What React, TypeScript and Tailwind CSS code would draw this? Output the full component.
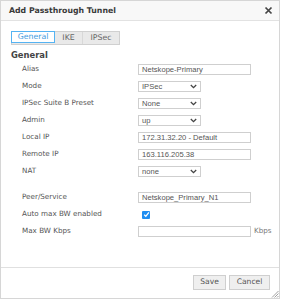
import { useState } from 'react';

const LABEL = "font-['DejaVu_Sans',sans-serif] text-[7.2px] text-[#555]";
const VALUE = "font-['Liberation_Sans',Arial,sans-serif] text-[7.6px] text-[#555]";

// text field
function TextBox({ value, wide = true }: { value: string; wide?: boolean }) {
  return (
    <div
      className={[
        'h-[11px] border border-[#cfcfcf] bg-white flex items-center px-[3px] leading-none',
        wide ? 'w-[113px]' : 'w-[63px]',
        VALUE,
      ].join(' ')}
    >
      {value}
    </div>
  );
}

// select box
function SelectBox({ value }: { value: string }) {
  return (
    <div
      className={[
        'h-[11px] w-[63px] border border-[#cfcfcf] bg-white flex items-center justify-between pl-[3px] pr-[3px] leading-none',
        VALUE,
      ].join(' ')}
    >
      <span>{value}</span>
      <svg width="7" height="5" viewBox="0 0 7 5">
        <path d="M0.8 1 L3.5 3.7 L6.2 1" fill="none" stroke="#444" strokeWidth="1.3" />
      </svg>
    </div>
  );
}

function Row({ label, children }: { label: string; children: React.ReactNode }) {
  return (
    <div className="grid grid-cols-[116px_1fr] items-center h-[17px]">
      <span className={LABEL}>{label}</span>
      <div className="flex items-center">{children}</div>
    </div>
  );
}

export default function App() {
  const [tab, setTab] = useState('General');
  const [autoBw, setAutoBw] = useState(true);

  return (
    <div className="w-[280px] h-[299px] border border-[#d6d6d6] bg-white flex flex-col relative">
      {/* header */}
      <div className="h-[20px] shrink-0 border-b border-[#e2e2e2] bg-[#f8f8f8] flex items-center justify-between pl-[8px] pr-[5px]">
        <span className="font-['DejaVu_Sans',sans-serif] font-bold text-[7.8px] text-[#3a3a3a]">
          Add Passthrough Tunnel
        </span>
        <svg width="9" height="9" viewBox="0 0 9 9" className="mr-[1px]">
          <path d="M1.5 1.5 L7.5 7.5 M7.5 1.5 L1.5 7.5" stroke="#444" strokeWidth="1.7" />
        </svg>
      </div>

      {/* body */}
      <div className="flex-1 px-[10px] pt-[10px]">
        <div className="flex w-fit h-[14px] bg-[#e9e9e9] border border-[#d0d0d0]">
          {['General', 'IKE', 'IPSec'].map((t) => (
            <button
              key={t}
              onClick={() => setTab(t)}
              className={[
                "h-full flex items-center justify-center font-['DejaVu_Sans',sans-serif] text-[7.8px] leading-none",
                t === 'General' ? 'w-[44px]' : t === 'IKE' ? 'w-[28px] border-r border-[#d8d8d8]' : 'w-[36px]',
                tab === t
                  ? 'bg-white border border-[#55b3f2] text-[#3d9be0] -my-px -ml-px'
                  : 'text-[#666]',
              ].join(' ')}
            >
              {t}
            </button>
          ))}
        </div>

        <div className="mt-[5px] h-[11px] flex items-center font-['DejaVu_Sans',sans-serif] font-bold text-[8.4px] text-[#444] leading-none">
          General
        </div>

        <div className="pl-[11px]">
          <Row label="Alias">
            <TextBox value="Netskope-Primary" />
          </Row>
          <Row label="Mode">
            <SelectBox value="IPSec" />
          </Row>
          <Row label="IPSec Suite B Preset">
            <SelectBox value="None" />
          </Row>
          <Row label="Admin">
            <SelectBox value="up" />
          </Row>
          <Row label="Local IP">
            <TextBox value="172.31.32.20 - Default" />
          </Row>
          <Row label="Remote IP">
            <TextBox value="163.116.205.38" />
          </Row>
          <Row label="NAT">
            <SelectBox value="none" />
          </Row>
          <div className="h-[9px]" />
          <Row label="Peer/Service">
            <TextBox value="Netskope_Primary_N1" />
          </Row>
          <Row label="Auto max BW enabled">
            <button
              onClick={() => setAutoBw(!autoBw)}
              className={[
                'ml-[4px] w-[8px] h-[8px] rounded-[1px] flex items-center justify-center',
                autoBw ? 'bg-[#1f8ef1]' : 'bg-white border border-[#aaa]',
              ].join(' ')}
            >
              {autoBw && (
                <svg width="7" height="7" viewBox="0 0 7 7">
                  <path d="M1.2 3.8 L2.8 5.3 L5.9 1.3" fill="none" stroke="white" strokeWidth="1.3" />
                </svg>
              )}
            </button>
          </Row>
          <Row label="Max BW Kbps">
            <TextBox value="" />
            <span className={LABEL + ' ml-[3px] text-[#777]'}>Kbps</span>
          </Row>
        </div>
      </div>

      {/* footer */}
      <div className="h-[31px] shrink-0 border-t border-[#e0e0e0] flex items-center justify-end gap-[3px] pr-[9px] pb-[2px]">
        <button className="w-[33px] h-[15px] bg-[#efefef] border border-[#cfcfcf] font-['DejaVu_Sans',sans-serif] text-[7.6px] text-[#555] leading-none">
          Save
        </button>
        <button className="w-[41px] h-[15px] bg-[#efefef] border border-[#cfcfcf] font-['DejaVu_Sans',sans-serif] text-[7.6px] text-[#555] leading-none">
          Cancel
        </button>
      </div>

      {/* resize grip */}
      <svg width="8" height="8" viewBox="0 0 8 8" className="absolute right-[0px] bottom-[0px]">
        <path d="M7.5 1 L1 7.5 M7.5 3.5 L3.5 7.5 M7.5 6 L6 7.5" stroke="#888" strokeWidth="0.8" />
      </svg>
    </div>
  );
}
